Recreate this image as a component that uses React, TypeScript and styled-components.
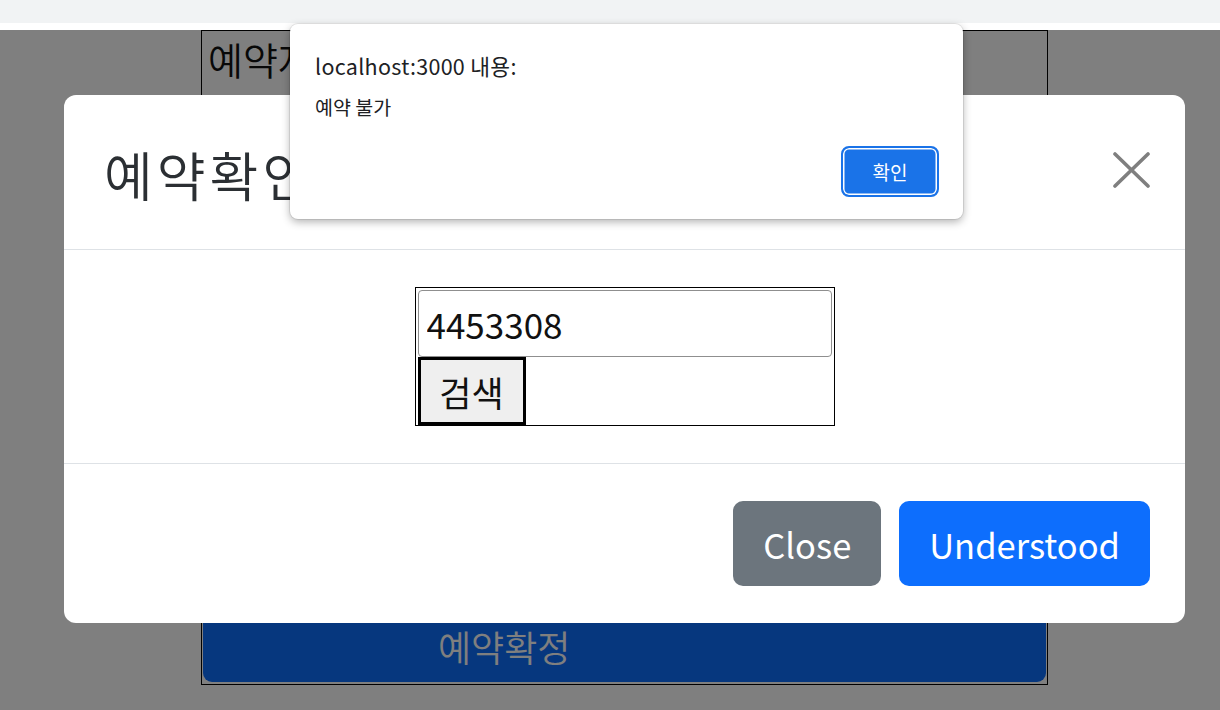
import React from 'react';
import styled, { createGlobalStyle } from 'styled-components';

const GlobalStyle = createGlobalStyle`
  html, body {
    margin: 0;
    padding: 0;
    overflow: hidden;
    background: #ffffff;
    font-family: 'Noto Sans CJK KR', 'Noto Sans', sans-serif;
  }
`;

const Shell = styled.div`
  position: relative;
  width: 1220px;
  height: 710px;
  overflow: hidden;
`;

const BrowserStrip = styled.div`
  height: 23px;
  background: #f1f3f4;
  border-bottom: 6px solid #ffffff;
`;

const Viewport = styled.div`
  position: relative;
  height: 681px;
  background: #ffffff;
`;

const Page = styled.div`
  margin: 1px 0 0 201px;
  width: 847px;
  height: 655px;
  box-sizing: border-box;
  border: 1px solid #000;
  padding: 0 1px 2px;
  display: flex;
  flex-direction: column;
`;

const PageHeading = styled.div`
  font-size: 38px;
  font-weight: 350;
  line-height: 56px;
  color: #111;
  padding-left: 5px;
`;

const ConfirmButton = styled.button`
  margin-top: auto;
  height: 72px;
  border: none;
  border-radius: 9px;
  background: #0d6efd;
  color: #ffffff;
  font-family: inherit;
  font-size: 36px;
  font-weight: 350;
  text-align: left;
  padding: 0 0 0 235px;
`;

const Backdrop = styled.div`
  position: absolute;
  inset: 0;
  background: rgba(0, 0, 0, 0.5);
`;

const ModalLayer = styled.div`
  position: absolute;
  inset: 0;
  padding: 65px 0 0 64px;
`;

const Modal = styled.div`
  width: 1121px;
  background: #ffffff;
  border-radius: 12px;
  overflow: hidden;
`;

const ModalHeader = styled.div`
  height: 155px;
  box-sizing: border-box;
  border-bottom: 1px solid #dee2e6;
  padding: 4px 35px 0 40px;
  display: flex;
  align-items: center;
  justify-content: space-between;
`;

const ModalTitle = styled.h5`
  margin: 0;
  font-size: 53px;
  font-weight: 350;
  letter-spacing: 4px;
  line-height: 1.4;
  color: #2b2f33;
`;

const CloseIcon = styled.button`
  width: 37px;
  height: 36px;
  margin-top: -8px;
  padding: 0;
  border: none;
  background: transparent;
  display: flex;
`;

const ModalBody = styled.div`
  padding: 37px 0 37px;
  display: flex;
  justify-content: center;
`;

const SearchBox = styled.div`
  width: 420px;
  height: 139px;
  box-sizing: border-box;
  border: 1px solid #000;
  padding: 2px 2px 0;
  display: flex;
  flex-direction: column;
  align-items: flex-start;
`;

const SearchInput = styled.input`
  width: 414px;
  height: 68px;
  box-sizing: border-box;
  margin: 0;
  border: 1px solid #8f8f8f;
  border-radius: 4px;
  padding: 0 8px;
  font-family: inherit;
  font-size: 35px;
  color: #111;
  outline: none;
`;

const SearchButton = styled.button`
  width: 108px;
  height: 68px;
  box-sizing: border-box;
  margin: 0;
  border: 3px solid #000;
  background: #efefef;
  padding: 0;
  font-family: inherit;
  font-size: 35px;
  color: #111;
`;

const ModalFooter = styled.div`
  height: 160px;
  box-sizing: border-box;
  border-top: 1px solid #dee2e6;
  padding-right: 35px;
  display: flex;
  align-items: center;
  justify-content: flex-end;
  gap: 18px;
`;

const FooterButton = styled.button<{ $tone: 'secondary' | 'primary' }>`
  height: 85px;
  padding: 0 30px;
  border: none;
  border-radius: 10px;
  background: ${p => (p.$tone === 'primary' ? '#0d6efd' : '#6c757d')};
  color: #ffffff;
  font-family: inherit;
  font-size: 34.5px;
`;

const Alert = styled.div`
  position: absolute;
  top: 24px;
  left: 290px;
  width: 673px;
  height: 195px;
  box-sizing: border-box;
  background: #ffffff;
  border-radius: 8px;
  box-shadow: 0 0 0 1px rgba(0, 0, 0, 0.08), 0 3px 8px rgba(0, 0, 0, 0.3);
  padding: 26px 24px 22px 25px;
  display: flex;
  flex-direction: column;
`;

const AlertOrigin = styled.div`
  font-size: 21.5px;
  letter-spacing: 0.3px;
  line-height: 32px;
  color: #202124;
`;

const AlertMessage = styled.div`
  font-size: 19.5px;
  line-height: 28px;
  margin-top: 11px;
  color: #202124;
`;

const AlertActions = styled.div`
  margin-top: auto;
  display: flex;
  justify-content: flex-end;
`;

const AlertButton = styled.button`
  width: 98px;
  height: 51px;
  box-sizing: border-box;
  border: 2px solid #1a73e8;
  border-radius: 8px;
  background: #1a73e8;
  box-shadow: inset 0 0 0 1.5px #ffffff;
  color: #ffffff;
  font-family: inherit;
  font-size: 19px;
`;

function App() {
  return (
    <Shell>
      <GlobalStyle />
      <BrowserStrip />
      <Viewport>
        <Page>
          <PageHeading>예약자 정보</PageHeading>
          <ConfirmButton>예약확정</ConfirmButton>
        </Page>
        <Backdrop />
        <ModalLayer>
          <Modal>
            <ModalHeader>
              <ModalTitle>예약확인</ModalTitle>
              <CloseIcon aria-label="Close">
                <svg width="37" height="36" viewBox="0 0 37 36">
                  <path
                    d="M2 2 L35 34 M35 2 L2 34"
                    stroke="#7f7f7f"
                    strokeWidth="3.6"
                    strokeLinecap="round"
                    fill="none"
                  />
                </svg>
              </CloseIcon>
            </ModalHeader>
            <ModalBody>
              <SearchBox>
                <SearchInput defaultValue="4453308" />
                <SearchButton>검색</SearchButton>
              </SearchBox>
            </ModalBody>
            <ModalFooter>
              <FooterButton $tone="secondary">Close</FooterButton>
              <FooterButton $tone="primary">Understood</FooterButton>
            </ModalFooter>
          </Modal>
        </ModalLayer>
      </Viewport>
      <Alert>
        <AlertOrigin>localhost:3000 내용:</AlertOrigin>
        <AlertMessage>예약 불가</AlertMessage>
        <AlertActions>
          <AlertButton>확인</AlertButton>
        </AlertActions>
      </Alert>
    </Shell>
  );
}

export default App;
